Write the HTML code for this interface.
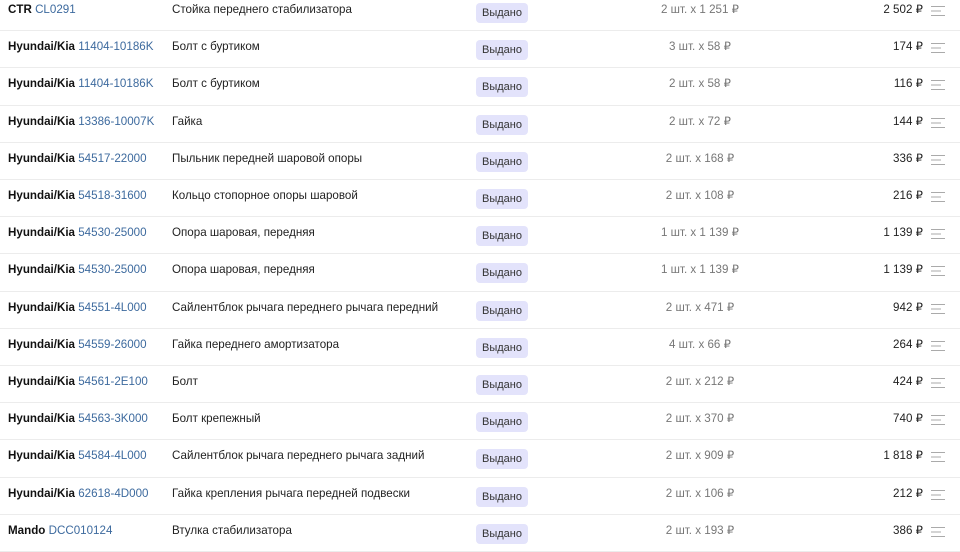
<!DOCTYPE html>
<html><head><meta charset="utf-8"><style>
body{margin:0;width:960px;height:552px;overflow:hidden;background:#fff;font-family:"Liberation Sans",Arial,sans-serif;font-size:11.6px;color:#222}
.r{position:absolute;left:0;width:960px;height:37.2px;border-bottom:1px solid #ececec;box-sizing:border-box}
.r>*{position:absolute;top:0;line-height:32px}
.b{left:8px}.b b{font-weight:bold;color:#111}.b span{color:#3d6a9e}
.n{left:172px}
.s{left:476px;top:9px;line-height:20px;height:20px;padding:0 6px;background:#e3e3fb;border-radius:4px;color:#333;font-size:11px}
.q{left:600px;width:200px;text-align:center;color:#777;font-size:11.6px}
.t{right:37px;text-align:right;color:#222}
.m{left:931px;top:11px;width:14px;height:12px}
</style></head><body>
<div id="w"></div>
<script>
var d=[["CTR","CL0291","Стойка переднего стабилизатора","2 шт. x 1 251 ₽","2 502 ₽"],
["Hyundai/Kia","11404-10186K","Болт с буртиком","3 шт. x 58 ₽","174 ₽"],
["Hyundai/Kia","11404-10186K","Болт с буртиком","2 шт. x 58 ₽","116 ₽"],
["Hyundai/Kia","13386-10007K","Гайка","2 шт. x 72 ₽","144 ₽"],
["Hyundai/Kia","54517-22000","Пыльник передней шаровой опоры","2 шт. x 168 ₽","336 ₽"],
["Hyundai/Kia","54518-31600","Кольцо стопорное опоры шаровой","2 шт. x 108 ₽","216 ₽"],
["Hyundai/Kia","54530-25000","Опора шаровая, передняя","1 шт. x 1 139 ₽","1 139 ₽"],
["Hyundai/Kia","54530-25000","Опора шаровая, передняя","1 шт. x 1 139 ₽","1 139 ₽"],
["Hyundai/Kia","54551-4L000","Сайлентблок рычага переднего рычага передний","2 шт. x 471 ₽","942 ₽"],
["Hyundai/Kia","54559-26000","Гайка переднего амортизатора","4 шт. x 66 ₽","264 ₽"],
["Hyundai/Kia","54561-2E100","Болт","2 шт. x 212 ₽","424 ₽"],
["Hyundai/Kia","54563-3K000","Болт крепежный","2 шт. x 370 ₽","740 ₽"],
["Hyundai/Kia","54584-4L000","Сайлентблок рычага переднего рычага задний","2 шт. x 909 ₽","1 818 ₽"],
["Hyundai/Kia","62618-4D000","Гайка крепления рычага передней подвески","2 шт. x 106 ₽","212 ₽"],
["Mando","DCC010124","Втулка стабилизатора","2 шт. x 193 ₽","386 ₽"]];
var h="";
d.forEach(function(x,i){h+='<div class="r" style="top:'+(-6+i*37.2)+'px"><div class="b"><b>'+x[0]+'</b> <span>'+x[1]+'</span></div><div class="n">'+x[2]+'</div><div class="s">Выдано</div><div class="q">'+x[3]+'</div><div class="t">'+x[4]+'</div><svg class="m" viewBox="0 0 14 12"><path d="M0 1.5H14M0 6H10M0 10.5H14" stroke="#aaa" stroke-width="1"/></svg></div>';});
document.getElementById("w").innerHTML=h;
</script>
</body></html>
